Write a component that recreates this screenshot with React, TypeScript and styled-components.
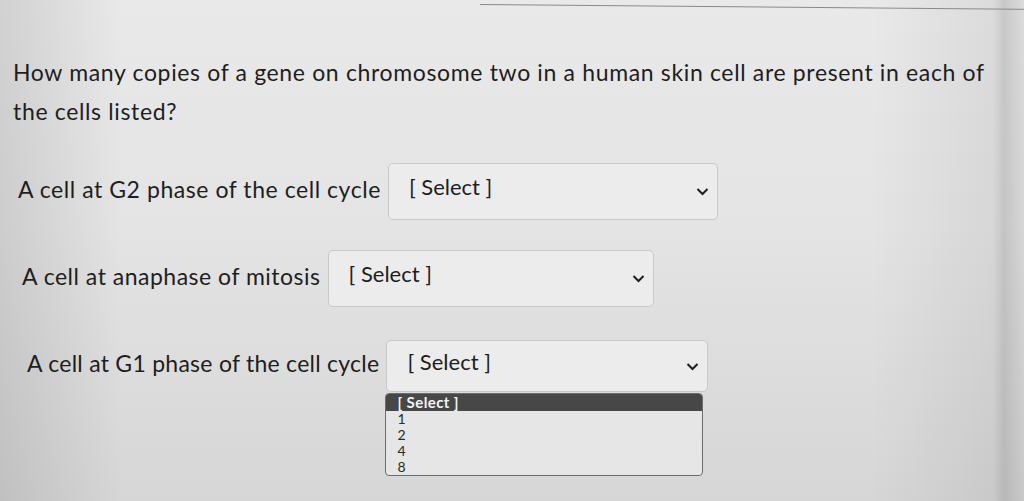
import styled, { createGlobalStyle } from 'styled-components';

const GlobalStyle = createGlobalStyle`
  html, body {
    margin: 0;
    padding: 0;
  }
  body {
    font-family: Lato, "Open Sans", sans-serif;
    color: #1e1e1e;
  }
`;

const Screen = styled.div`
  position: relative;
  width: 1024px;
  height: 501px;
  overflow: hidden;
  box-sizing: border-box;
  padding: 53px 0 0 13px;
  background:
    linear-gradient(90deg, rgba(0, 0, 0, 0.1) 0%, rgba(0, 0, 0, 0) 12%, rgba(0, 0, 0, 0) 85%, rgba(0, 0, 0, 0.06) 97%, rgba(0, 0, 0, 0.14) 98%, rgba(0, 0, 0, 0.06) 100%),
    linear-gradient(180deg, #e9e9e9 0%, #e4e4e4 45%, #d6d6d6 100%);
`;

const TopEdge = styled.div`
  position: absolute;
  top: 4px;
  left: 480px;
  right: 0;
  height: 1px;
  background: #8a8a8a;
  transform: rotate(0.5deg);
  transform-origin: left;
`;

const Question = styled.p`
  margin: 0;
  width: 995px;
  font-size: 23px;
  letter-spacing: 0.65px;
  line-height: 39px;
`;

const Rows = styled.div`
  display: flex;
  flex-direction: column;
  gap: 30px;
  margin-top: 32px;
`;

const Row = styled.div<{ $indent: number; $offset?: number }>`
  display: flex;
  align-items: center;
  gap: 7px;
  padding-left: ${(p) => p.$indent}px;
  margin-top: ${(p) => p.$offset ?? 0}px;
`;

const Label = styled.span<{ $spacing: number }>`
  font-size: 23px;
  letter-spacing: ${(p) => p.$spacing}px;
  margin-top: -6px;
`;

const SelectWrap = styled.div`
  position: relative;
`;

const SelectBox = styled.div<{ $width: number; $height: number }>`
  box-sizing: border-box;
  width: ${(p) => p.$width}px;
  height: ${(p) => p.$height}px;
  display: flex;
  align-items: center;
  justify-content: space-between;
  padding: 0 8px 0 20px;
  border: 1px solid #c9c9c9;
  border-radius: 5px;
  background: #ececec;
`;

const SelectText = styled.span`
  font-size: 22px;
  margin-top: -10px;
`;

const Chevron = styled.svg`
  width: 13px;
  height: 9px;
  flex-shrink: 0;
`;

const Dropdown = styled.div`
  position: absolute;
  top: calc(100% + 1px);
  left: -1px;
  width: 318px;
  box-sizing: border-box;
  border: 1px solid #6d6d6d;
  border-radius: 4px;
  background: #e6e6e6;
  overflow: hidden;
`;

const Option = styled.div<{ $active?: boolean }>`
  padding-left: 11px;
  height: ${(p) => (p.$active ? '17px' : '16px')};
  line-height: ${(p) => (p.$active ? '17px' : '16px')};
  background: ${(p) => (p.$active ? '#474747' : 'transparent')};
  color: ${(p) => (p.$active ? '#f4f4f4' : '#2a2a2a')};
  font-size: ${(p) => (p.$active ? '15px' : '14px')};
  font-weight: ${(p) => (p.$active ? 700 : 400)};
  letter-spacing: ${(p) => (p.$active ? '0.4px' : '0')};
`;

function ChevronIcon(): JSX.Element {
  return (
    <Chevron viewBox="0 0 13 9">
      <path d="M1.5 2 L6.5 7 L11.5 2" fill="none" stroke="#1e1e1e" strokeWidth="2" />
    </Chevron>
  );
}

interface SelectProps {
  width: number;
  height: number;
  open?: boolean;
}

function Select({ width, height, open }: SelectProps): JSX.Element {
  return (
    <SelectWrap>
      <SelectBox $width={width} $height={height}>
        <SelectText>[ Select ]</SelectText>
        <ChevronIcon />
      </SelectBox>
      {open && (
        <Dropdown>
          <Option $active>[ Select ]</Option>
          {['1', '2', '4', '8'].map((o) => (
            <Option key={o}>{o}</Option>
          ))}
        </Dropdown>
      )}
    </SelectWrap>
  );
}

const rows = [
  { label: 'A cell at G2 phase of the cell cycle', indent: 5, spacing: 0.55, width: 330, height: 57 },
  { label: 'A cell at anaphase of mitosis', indent: 9, spacing: 0.5, width: 326, height: 57 },
  { label: 'A cell at G1 phase of the cell cycle', indent: 14, spacing: 0.26, width: 322, height: 52, offset: 3, open: true },
];

export default function App(): JSX.Element {
  return (
    <>
      <GlobalStyle />
      <Screen>
        <TopEdge />
        <Question>
          How many copies of a gene on chromosome two in a human skin cell are present in each of the
          cells listed?
        </Question>
        <Rows>
          {rows.map((r) => (
            <Row key={r.label} $indent={r.indent} $offset={r.offset}>
              <Label $spacing={r.spacing}>{r.label}</Label>
              <Select width={r.width} height={r.height} open={r.open} />
            </Row>
          ))}
        </Rows>
      </Screen>
    </>
  );
}
